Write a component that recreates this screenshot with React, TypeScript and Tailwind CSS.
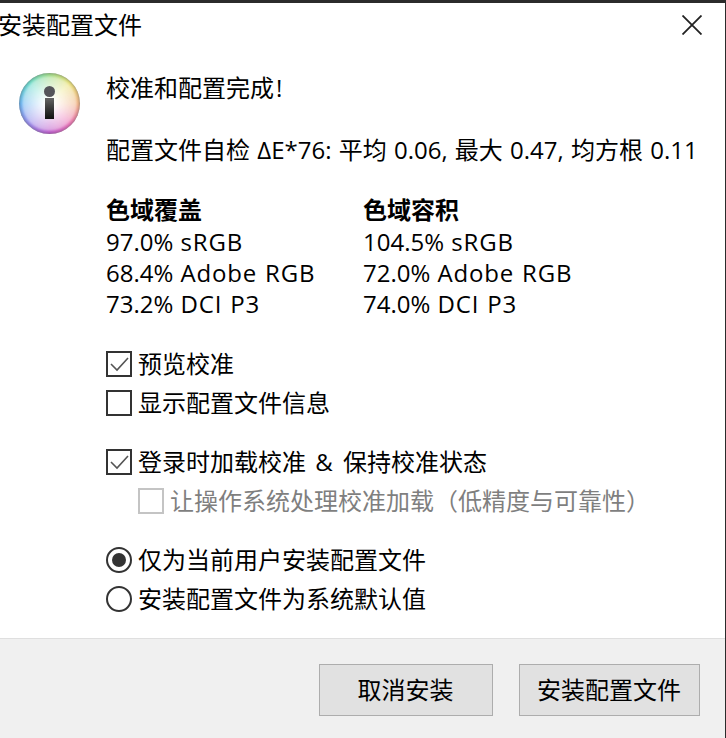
const font = "font-['Open_Sans','Noto_Sans_CJK_SC',sans-serif]"

function InfoIcon() {
  return (
    <div className="relative mt-[1px] h-[61px] w-[61px] rounded-full bg-[conic-gradient(#98d880,#e8e070,#f0b080,#e868b0,#b850c8,#9080e8,#60b0f0,#60d8c8,#98d880)] shadow-[inset_0_0_3px_#77777a]">
      <div className="absolute inset-[3px] rounded-full bg-[radial-gradient(circle,#ffffff_10%,#ffffff90_60%,#ffffff20_100%)] blur-[1px]" />
      <div className="absolute left-[25px] top-[13px] h-[11px] w-[11px] rounded-full bg-[#55555a]" />
      <div className="absolute left-[26px] top-[25px] h-[21px] w-[9px] bg-gradient-to-b from-[#666] to-[#111]" />
    </div>
  )
}

function Checkbox({ checked, disabled }: { checked?: boolean; disabled?: boolean }) {
  return (
    <span className={`flex h-[26px] w-[26px] shrink-0 items-center justify-center border-2 bg-white ${disabled ? "border-[#c4c4c4]" : "border-[#333333]"}`}>
      {checked && (
        <svg width="22" height="22" viewBox="0 0 22 22" fill="none">
          <path d="M3 11 L9 17 L20 5" stroke="#555" strokeWidth="1.6" />
        </svg>
      )}
    </span>
  )
}

function Radio({ checked }: { checked?: boolean }) {
  return (
    <span className="flex h-[26px] w-[26px] shrink-0 items-center justify-center rounded-full border-2 border-[#333333] bg-white">
      {checked && <span className="h-[14px] w-[14px] rounded-full bg-[#333333]" />}
    </span>
  )
}

function Row({ control, children, className = "" }: { control: React.ReactNode; children: React.ReactNode; className?: string }) {
  return (
    <div className={`flex h-[39px] items-center gap-[6px] ${className}`}>
      {control}
      <span>{children}</span>
    </div>
  )
}

function GamutLine({ value, name }: { value: string; name: string }) {
  return (
    <p>
      {value} <span className="tracking-[0.8px]">{name}</span>
    </p>
  )
}

export default function App() {
  return (
    <div className={`${font} h-[738px] w-[726px] overflow-hidden border-r border-t-[3px] border-[#2b2b2b] bg-white text-[24px] leading-[31px] text-black [word-spacing:1px]`}>
      <div className="flex h-[635px] flex-col">
        <div className="flex h-[44px] items-center justify-between pr-[23px]">
          <span className="-ml-[2px] pb-[2px]">安装配置文件</span>
          <svg width="20" height="20" viewBox="0 0 20 20" fill="none">
            <path d="M0.5 0.5 L19.5 19.5 M19.5 0.5 L0.5 19.5" stroke="#222" strokeWidth="1.8" />
          </svg>
        </div>

        <div className="flex gap-[26px] pl-[19px] pt-[25px]">
          <InfoIcon />
          <div className="-mt-[1px]">
            <p className="pt-[1px]">校准和配置完成<span className="ml-[2px]">!</span></p>
            <p className="mt-[31px]">配置文件自检 ΔE*76: 平均 0.06, 最大 0.47, 均方根 0.11</p>

            <div className="mt-[30px] flex">
              <div className="w-[257px]">
                <p className="-mt-[1px] mb-[1px] font-bold">色域覆盖</p>
                <GamutLine value="97.0%" name="sRGB" />
                <GamutLine value="68.4%" name="Adobe RGB" />
                <GamutLine value="73.2%" name="DCI P3" />
              </div>
              <div>
                <p className="-mt-[1px] mb-[1px] font-bold">色域容积</p>
                <GamutLine value="104.5%" name="sRGB" />
                <GamutLine value="72.0%" name="Adobe RGB" />
                <GamutLine value="74.0%" name="DCI P3" />
              </div>
            </div>

            <div className="mt-[25px]">
              <Row control={<Checkbox checked />}>预览校准</Row>
              <Row control={<Checkbox />}>显示配置文件信息</Row>
            </div>
            <div className="mt-[20px]">
              <Row control={<Checkbox checked />}>
                登录时加载校准 <span className="mx-[2px] tracking-[1px]">&amp;</span> 保持校准状态
              </Row>
              <Row control={<Checkbox disabled />} className="pl-[32px] text-[#7f7f7f]">
                让操作系统处理校准加载（低精度与可靠性）
              </Row>
            </div>
            <div className="mt-[20px]">
              <Row control={<Radio checked />}>仅为当前用户安装配置文件</Row>
              <Row control={<Radio />}>安装配置文件为系统默认值</Row>
            </div>
          </div>
        </div>
      </div>

      <div className="flex h-[100px] items-start justify-end gap-[26px] border-t border-[#dfdfdf] bg-[#f0f0f0] pr-[25px] pt-[25px]">
        <button className="h-[52px] w-[174px] border border-[#adadad] bg-[#e1e1e1] pb-[2px] pr-[1px]">取消安装</button>
        <button className="h-[52px] w-[181px] border border-[#adadad] bg-[#e1e1e1] pb-[2px] pr-[1px]">安装配置文件</button>
      </div>
    </div>
  )
}
